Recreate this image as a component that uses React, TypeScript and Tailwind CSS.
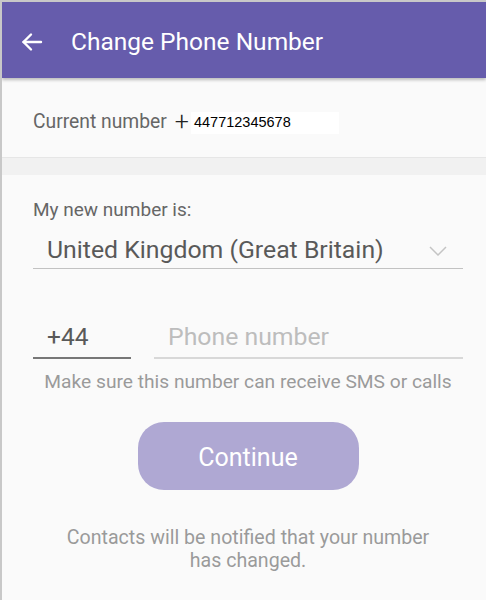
import React from 'react';

function BackArrow() {
  return (
    <svg width="24" height="24" viewBox="0 0 24 24" fill="none" stroke="white" strokeWidth="2.4" strokeLinecap="round" strokeLinejoin="round">
      <path d="M21 12H3.5" />
      <path d="M11 4.5L3.5 12L11 19.5" />
    </svg>
  );
}

function Chevron() {
  return (
    <svg width="18" height="10" viewBox="0 0 18 10" fill="none" stroke="#c4c4c4" strokeWidth="1.5">
      <path d="M1 1L9 9L17 1" />
    </svg>
  );
}

export default function App() {
  return (
    <div
      className="w-[486px] h-[600px] overflow-hidden bg-[#fafafa] border-t-2 border-l-2 border-[#c8c8c8] flex flex-col"
      style={{ fontFamily: 'Roboto, "Noto Sans", sans-serif' }}
    >
      {/* toolbar */}
      <div className="h-[76px] shrink-0 bg-[#665cac] flex items-center pl-[18px] pt-[4px] shadow-[0_2px_3px_rgba(0,0,0,0.25)] relative z-10">
        <BackArrow />
        <span className="ml-[27px] text-white text-[24.5px] leading-none">Change Phone Number</span>
      </div>

      {/* current number */}
      <div className="h-[79px] shrink-0 flex items-center pl-[31px] pt-[10px]">
        <span className="text-[#666] text-[19.3px]">Current number</span>
        <span className="ml-[8px] text-[#222] text-[25px] leading-none font-light mb-[3px]">+</span>
        <span
          className="ml-[2px] bg-white w-[148px] h-[22px] flex items-center pl-[3px] text-black text-[14.5px]"
          style={{ fontFamily: '"Liberation Sans", Arial, sans-serif' }}
        >
          447712345678
        </span>
      </div>

      <div className="h-[18px] shrink-0 bg-[#f1f1f1] border-t border-[#e6e6e6]" />

      {/* new number form */}
      <div className="flex-1 pl-[31px] pr-[23px] pt-[24px] flex flex-col">
        <div className="text-[#666] text-[19px] leading-[22px]">My new number is:</div>

        <div className="mt-[6px] h-[42px] flex items-center justify-between border-b-[1.5px] border-[#c2c2c2] pl-[14px] pr-[16px] pt-[6px]">
          <span className="text-[#595959] text-[24.8px] leading-none">United Kingdom (Great Britain)</span>
          <Chevron />
        </div>

        <div className="mt-[48px] flex gap-[23px]">
          <div className="w-[98px] h-[42px] border-b-2 border-[#777] pl-[14px] flex items-center text-[#595959] text-[24.5px]">
            +44
          </div>
          <div className="flex-1 h-[42px] border-b-2 border-[#d8d8d8] pl-[14px] flex items-center text-[#bdbdbd] text-[24.8px]">
            Phone number
          </div>
        </div>

        <div className="mt-[12px] text-center text-[#9a9a9a] text-[19.2px] leading-[22px]">
          Make sure this number can receive SMS or calls
        </div>

        <div className="mt-[29px] flex justify-center">
          <button className="w-[221px] h-[68px] rounded-[26px] bg-[#afa8d3] text-white text-[25px] pt-[3px]">
            Continue
          </button>
        </div>

        <div className="mt-[36px] text-center text-[#9a9a9a] text-[19.6px] leading-[23px] px-[20px]">
          Contacts will be notified that your number has changed.
        </div>
      </div>
    </div>
  );
}
